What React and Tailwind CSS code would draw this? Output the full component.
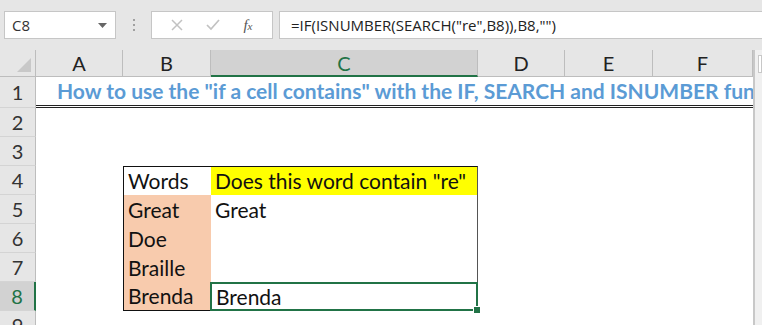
import { useState } from "react"

const cols = [
  { id: "A", w: "w-[87px]" },
  { id: "B", w: "w-[88px]" },
  { id: "C", w: "w-[267px]" },
  { id: "D", w: "w-[87px]" },
  { id: "E", w: "w-[88px]" },
  { id: "F", w: "w-[100px]" },
]

const words = ["Great", "Doe", "Braille", "Brenda"]

function RowHead({ n, active }) {
  return (
    <div
      className={
        "w-[36px] h-full shrink-0 flex items-center justify-center border-b border-[#d4d4d4] text-[20px] " +
        (active
          ? "bg-[#d2d2d2] text-[#217346] border-r-2 border-r-[#217346]"
          : "bg-[#e6e6e6] text-[#333] border-r border-r-[#bdbdbd]")
      }
    >
      {n}
    </div>
  )
}

export default function App() {
  const [active] = useState("C8")

  return (
    <div className="w-[762px] h-[325px] overflow-hidden bg-white font-['Lato',sans-serif] text-[21px] text-[#111]">
      {/* formula bar */}
      <div className="h-[50px] bg-[#e6e6e6] flex items-start pt-[11px] font-['Open_Sans',sans-serif]">
        <div className="ml-[4px] w-[112px] h-[28px] bg-white border border-[#c6c6c6] flex items-center justify-between pl-[7px] pr-[8px] text-[15px] text-[#333]">
          <span>{active}</span>
          <svg width="9" height="5" viewBox="0 0 9 5">
            <path d="M0 0h9L4.5 5z" fill="#666" />
          </svg>
        </div>
        <div className="w-[35px] h-[28px] flex flex-col items-center justify-center gap-[3px]">
          <span className="w-[2px] h-[2px] bg-[#a0a0a0]" />
          <span className="w-[2px] h-[2px] bg-[#a0a0a0]" />
          <span className="w-[2px] h-[2px] bg-[#a0a0a0]" />
        </div>
        <div className="w-[122px] h-[28px] bg-white border border-[#c6c6c6] flex items-center justify-around px-[8px]">
          <svg width="12" height="12" viewBox="0 0 12 12">
            <path d="M1 1l10 10M11 1L1 11" stroke="#c2c2c2" strokeWidth="1.5" />
          </svg>
          <svg width="14" height="12" viewBox="0 0 14 12">
            <path d="M1 6l4 4 8-9" stroke="#c2c2c2" strokeWidth="1.7" fill="none" />
          </svg>
          <span className="font-['Liberation_Serif',serif] italic text-[15px] text-[#555] leading-none">
            f<span className="text-[11px]">x</span>
          </span>
        </div>
        <div className="ml-[6px] flex-1 h-[28px] bg-white border border-[#c6c6c6] border-r-0 flex items-center pl-[11px] text-[15px] text-[#222]">
          =IF(ISNUMBER(SEARCH("re",B8)),B8,"")
        </div>
      </div>

      <div className="flex">
        {/* sheet */}
        <div className="w-[753px] shrink-0">
          {/* column headers */}
          <div className="flex h-[27px]">
            <div className="w-[36px] shrink-0 bg-[#e6e6e6] border-r border-b border-[#bdbdbd] relative">
              <svg className="absolute right-[4px] bottom-[4px]" width="14" height="14" viewBox="0 0 14 14">
                <path d="M14 0v14H0z" fill="#c8c8c8" />
              </svg>
            </div>
            {cols.map((c) => (
              <div
                key={c.id}
                className={
                  c.w +
                  " shrink-0 flex items-center justify-center text-[20px] " +
                  (c.id === "C"
                    ? "bg-[#d2d2d2] text-[#217346] border-b-2 border-[#217346] border-r border-r-[#bdbdbd]"
                    : "bg-[#e6e6e6] text-[#222] border-r border-b border-[#bdbdbd]")
                }
              >
                {c.id}
              </div>
            ))}
          </div>

          {/* row 1 title */}
          <div className="flex h-[31px]">
            <RowHead n={1} />
            <div className="flex-1 min-w-0 border-b-[3px] border-double border-[#222] overflow-hidden whitespace-nowrap pl-[21px] font-bold text-[#5b9bd5] flex items-center">
              How to use the "if a cell contains" with the IF, SEARCH and ISNUMBER functions
            </div>
          </div>

          {[2, 3].map((n) => (
            <div key={n} className="flex h-[29px]">
              <RowHead n={n} />
            </div>
          ))}

          {/* row 4 header of table */}
          <div className="flex h-[29px]">
            <RowHead n={4} />
            <div className="w-[87px] shrink-0" />
            <div className="w-[88px] shrink-0 border-l border-t border-[#111] bg-white pl-[4px] flex items-center">
              Words
            </div>
            <div className="w-[267px] shrink-0 border-t border-r border-[#111] border-r-[#555] bg-[#ffff00] pl-[4px] flex items-center whitespace-nowrap">
              Does this word contain "re"
            </div>
          </div>

          {words.map((w, i) => {
            const n = i + 5
            const last = n === 8
            return (
              <div key={n} className="flex h-[29px]">
                <RowHead n={n} active={last} />
                <div className="w-[87px] shrink-0" />
                <div
                  className={
                    "w-[88px] shrink-0 border-l border-[#111] bg-[#f8cbad] pl-[4px] flex items-center " +
                    (last ? "border-b" : "")
                  }
                >
                  {w}
                </div>
                {last ? (
                  <div className="w-[268px] -ml-[1px] shrink-0 border-2 border-[#217346] bg-white pl-[4px] flex items-center relative">
                    Brenda
                    <span className="absolute -right-[5px] -bottom-[5px] w-[8px] h-[8px] bg-[#217346] border border-white" />
                  </div>
                ) : (
                  <div className="w-[267px] shrink-0 border-r border-[#555] bg-white pl-[4px] flex items-center">
                    {w === "Great" ? "Great" : ""}
                  </div>
                )}
              </div>
            )
          })}

          <div className="flex h-[29px]">
            <RowHead n={9} />
          </div>
        </div>

        {/* vertical scrollbar edge */}
        <div className="flex-1 h-[275px] bg-[#f0f0f0] border-l-2 border-[#c8c8c8] flex flex-col">
          <div className="h-[18px] mt-[5px] ml-[3px] bg-white border border-[#c8c8c8]" />
        </div>
      </div>
    </div>
  )
}
